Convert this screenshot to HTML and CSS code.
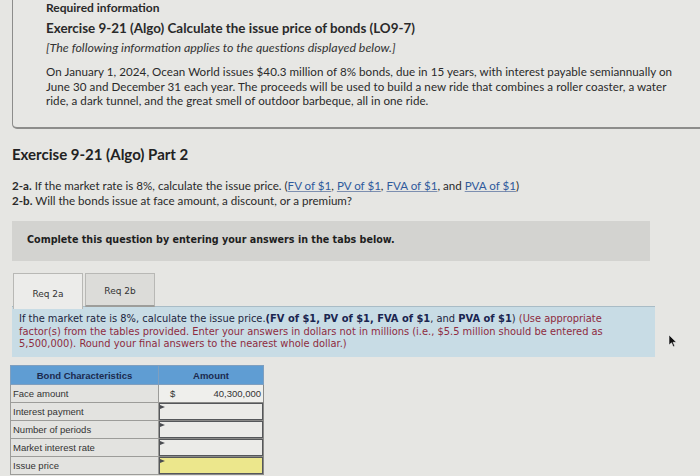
FILE: index.html
```html
<!DOCTYPE html>
<html>
<head>
<meta charset="utf-8">
<link rel="stylesheet" href="styles.css">
</head>
<body>
<div class="page">
  <div class="info">
    <div class="req">Required information</div>
    <div class="title">Exercise 9-21 (Algo) Calculate the issue price of bonds (LO9-7)</div>
    <div class="note">[The following information applies to the questions displayed below.]</div>
    <p class="para">On January 1, 2024, Ocean World issues $40.3 million of 8% bonds, due in 15 years, with interest payable semiannually on<br>June 30 and December 31 each year. The proceeds will be used to build a new ride that combines a roller coaster, a water<br>ride, a dark tunnel, and the great smell of outdoor barbeque, all in one ride.</p>
  </div>

  <div class="main">
    <h2 class="part">Exercise 9-21 (Algo) Part 2</h2>
    <p class="qs"><b>2-a.</b> If the market rate is 8%, calculate the issue price. (<a class="lnk">FV of $1</a>, <a class="lnk">PV of $1</a>, <a class="lnk">FVA of $1</a>, and <a class="lnk">PVA of $1</a>)<br><b>2-b.</b> Will the bonds issue at face amount, a discount, or a premium?</p>

    <div class="complete">Complete this question by entering your answers in the tabs below.</div>

    <div class="tabs">
      <div class="tab active">Req 2a</div>
      <div class="tab">Req 2b</div>
    </div>

    <div class="instr">If the market rate is 8%, calculate the issue price.<b>(FV of $1, PV of $1, FVA of $1</b>, and <b>PVA of $1</b>) <span class="red">(Use appropriate<br>factor(s) from the tables provided. Enter your answers in dollars not in millions (i.e., $5.5 million should be entered as<br>5,500,000). Round your final answers to the nearest whole dollar.)</span></div>

    <table class="bonds">
      <colgroup><col class="k1"><col class="k2"></colgroup>
      <tr><th>Bond Characteristics</th><th>Amount</th></tr>
      <tr><td class="c1">Face amount</td><td class="c2 face"><span class="dol">$</span><span class="amt">40,300,000</span></td></tr>
      <tr><td class="c1">Interest payment</td><td class="c2"><div class="inp"></div></td></tr>
      <tr><td class="c1">Number of periods</td><td class="c2"><div class="inp"></div></td></tr>
      <tr><td class="c1">Market interest rate</td><td class="c2"><div class="inp"></div></td></tr>
      <tr><td class="c1">Issue price</td><td class="c2"><div class="inp yellow"></div></td></tr>
    </table>
  </div>

  <svg class="cursor" width="10" height="14" viewBox="0 0 10 14"><path d="M1 1 L1 11 L3.5 8.8 L5.3 12.8 L6.8 12.1 L5.1 8.3 L8.4 8.3 Z" fill="#111" stroke="#eee" stroke-width="0.6"/></svg>
</div>
</body>
</html>
```
FILE: styles.css
```css
html, body { margin: 0; padding: 0; }
body {
  background: #e6e6e3;
  font-family: Lato, "Open Sans", sans-serif;
  color: #2a2a2a;
  width: 700px;
  height: 476px;
  overflow: hidden;
}
.page { position: relative; width: 700px; height: 476px; }

.info {
  margin-left: 12px;
  height: 129px;
  box-sizing: border-box;
  border-left: 1px solid #8d8d8b;
  border-bottom: 2px solid #8d8d8b;
  border-bottom-left-radius: 5px;
  padding: 0 0 0 33px;
  background: #e7e7e4;
}
.req { font-size: 12px; font-weight: 700; line-height: 15px; }
.title { font-size: 13.4px; font-weight: 700; line-height: 16px; margin-top: 5px; }
.note { font-size: 12.4px; font-style: italic; line-height: 14px; margin-top: 5px; color: #333; }
.para { font-size: 11.6px; line-height: 14.5px; margin: 10px 0 0; color: #2a2a2a; letter-spacing: 0.05px; }

.main { padding-left: 12px; }
.part { font-size: 15px; font-weight: 700; margin: 16px 0 0; line-height: 19px; color: #222; }
.qs { font-size: 11.6px; line-height: 15px; margin: 14px 0 0; color: #2a2a2a; }
.qs b { font-weight: 700; }
.lnk { color: #2f5a9c; text-decoration: underline; text-decoration-color: #7d8fb0; }

.complete {
  margin-top: 13px;
  width: 638px;
  height: 40px;
  box-sizing: border-box;
  background: #d3d3d0;
  padding: 13px 0 0 15px;
  font-family: "DejaVu Sans", Verdana, sans-serif;
  font-weight: 700;
  font-size: 9.6px;
  color: #1e1e1e;
}

.tabs { display: flex; gap: 2px; margin-top: 12px; height: 33px; align-items: flex-start; padding-left: 1px; }
.tab {
  width: 70px;
  height: 34px;
  box-sizing: border-box;
  border: 1px solid #b8b8b5;
  border-bottom: 2px solid #9d9d9a;
  background: #dcdcd9;
  font-family: "DejaVu Sans", Verdana, sans-serif;
  font-size: 9px;
  color: #333;
  display: flex;
  align-items: center;
  justify-content: center;
  padding-top: 2px;
}
.tab.active { background: #ececea; border-bottom: none; height: 36px; position: relative; z-index: 1; padding-top: 4px; }

.instr {
  width: 643px;
  height: 51px;
  box-sizing: border-box;
  background: #c8dce5;
  border-top: 1px solid #a9bcc6;
  padding: 6px 0 0 7px;
  font-family: "DejaVu Sans", Verdana, sans-serif;
  font-size: 9.9px;
  line-height: 12.5px;
  color: #1c2540;
}
.instr b { color: #1a2550; }
.red { color: #8e2b3e; }

.bonds {
  margin: 8px 0 0 -2px;
  border-collapse: collapse;
  table-layout: fixed;
  width: 253px;
  font-family: "Liberation Sans", Arial, sans-serif;
  font-size: 9.5px;
}
.k1 { width: 148px; }
.k2 { width: 105px; }
.bonds th {
  background: #5f9dd3;
  color: #1b2a4e;
  font-weight: 700;
  height: 18px;
  padding: 0;
  border: 1px solid #7f9fbf;
  text-align: center;
}
.bonds td {
  height: 17px;
  padding: 0;
  border: 1px solid #9c9c99;
  background: #e3e3e0;
  color: #333;
}
.bonds td.c1 { padding-left: 2px; }
.bonds td.c2 { background: #e6e6e3; border-color: #8a8a88; }
.bonds td.face { background: #efefec; padding: 0 2px 0 11px; }
.dol { float: left; }
.amt { float: right; }
.inp {
  position: relative;
  height: 15px;
  margin: 0;
  border: 1.5px solid #55575a;
  background: #ebebe8;
}
.inp::before {
  content: "";
  position: absolute;
  left: 0; top: 1px;
  border-left: 5px solid #4a4c50;
  border-top: 2.5px solid transparent;
  border-bottom: 2.5px solid transparent;
}
.inp.yellow { background: #ece78c; }

.cursor { position: absolute; left: 668px; top: 334px; }
```
